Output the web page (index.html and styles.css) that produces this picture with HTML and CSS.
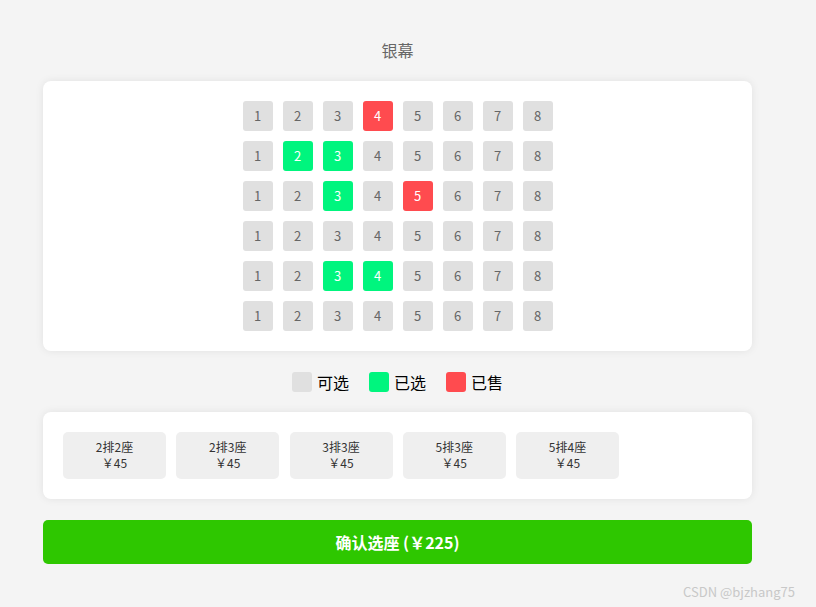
FILE: index.html
```html
<!DOCTYPE html>
<html lang="zh-CN">
<head>
    <meta charset="UTF-8">
    <meta name="viewport" content="width=device-width, initial-scale=1.0">
    <title>选座</title>
    <link rel="stylesheet" href="styles.css">
</head>
<body>
    <div class="page">
        <div class="screen">银幕</div>

        <div class="card seat-map" id="seat-map"></div>

        <div class="legend">
            <div class="legend-item"><span class="swatch"></span>可选</div>
            <div class="legend-item"><span class="swatch selected"></span>已选</div>
            <div class="legend-item"><span class="swatch sold"></span>已售</div>
        </div>

        <div class="card picked" id="picked"></div>

        <button class="confirm-button" id="confirm">确认选座 (￥225)</button>
    </div>
    <div class="watermark">CSDN @bjzhang75</div>

    <script>
        var rows = 6, cols = 8, price = 45;
        var sold = { '1-4': true, '3-5': true };
        var selected = ['2-2', '2-3', '3-3', '5-3', '5-4'];

        var map = document.getElementById('seat-map');
        for (var r = 1; r <= rows; r++) {
            var row = document.createElement('div');
            row.className = 'seat-row';
            for (var c = 1; c <= cols; c++) {
                var key = r + '-' + c;
                var seat = document.createElement('div');
                seat.className = 'seat';
                if (sold[key]) seat.className += ' sold';
                else if (selected.indexOf(key) > -1) seat.className += ' selected';
                seat.textContent = c;
                row.appendChild(seat);
            }
            map.appendChild(row);
        }

        var picked = document.getElementById('picked');
        selected.forEach(function(key) {
            var p = key.split('-');
            var item = document.createElement('div');
            item.className = 'picked-item';
            item.innerHTML = '<div>' + p[0] + '排' + p[1] + '座</div><div>￥' + price + '</div>';
            picked.appendChild(item);
        });
    </script>
</body>
</html>
```

FILE: styles.css
```css
body {
    font-family: "Noto Sans CJK SC", "Noto Sans", sans-serif;
    margin: 0;
    padding: 0;
    background-color: #f4f4f4;
}
.page {
    width: 709px;
    margin-left: 43px;
    padding-top: 38px;
}
.screen {
    text-align: center;
    font-size: 16px;
    line-height: 24px;
    color: #666;
    margin-bottom: 19px;
}
.card {
    background-color: #fff;
    border-radius: 8px;
    box-shadow: 0 0 8px rgba(0, 0, 0, 0.08);
}
.seat-map {
    padding: 20px 0;
    display: flex;
    flex-direction: column;
    align-items: center;
    gap: 10px;
}
.seat-row {
    display: flex;
    gap: 10px;
}
.seat {
    width: 30px;
    height: 30px;
    border-radius: 3px;
    background-color: #e0e0e0;
    color: #666;
    font-size: 13px;
    line-height: 30px;
    text-align: center;
}
.seat.selected {
    background-color: #00f57e;
    color: #fff;
}
.seat.sold {
    background-color: #ff4b4f;
    color: #fff;
}
.legend {
    display: flex;
    justify-content: center;
    gap: 20px;
    padding: 21px 0 20px;
}
.legend-item {
    display: flex;
    align-items: center;
    gap: 5px;
    font-size: 16px;
    line-height: 20px;
    color: #000;
}
.swatch {
    width: 20px;
    height: 20px;
    border-radius: 3px;
    background-color: #e0e0e0;
}
.swatch.selected {
    background-color: #00f57e;
}
.swatch.sold {
    background-color: #ff4b4f;
}
.picked {
    padding: 20px;
    display: flex;
    gap: 10.25px;
}
.picked-item {
    width: 103px;
    height: 47px;
    box-sizing: border-box;
    padding-top: 7px;
    border-radius: 5px;
    background-color: #efefef;
    color: #333;
    font-size: 12px;
    line-height: 16px;
    text-align: center;
}
.confirm-button {
    display: block;
    width: 100%;
    height: 44px;
    margin-top: 21px;
    border: none;
    border-radius: 5px;
    background-color: #2ec700;
    color: #fff;
    font-family: inherit;
    font-size: 16px;
    font-weight: bold;
    cursor: pointer;
}
.watermark {
    position: absolute;
    right: 21px;
    top: 582px;
    font-size: 13px;
    color: #c8c8c8;
}
```
